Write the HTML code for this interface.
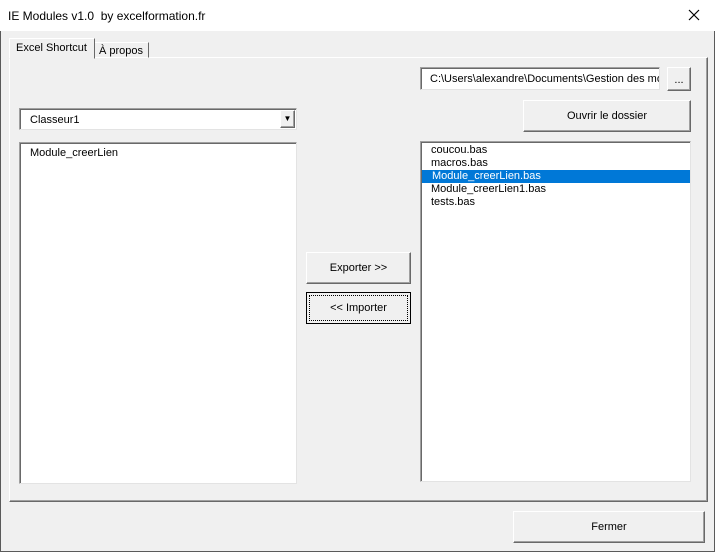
<!DOCTYPE html>
<html><head><meta charset="utf-8"><style>
*{margin:0;padding:0;box-sizing:border-box}
body{width:715px;height:552px;background:#f0f0f0;font-family:"Liberation Sans",sans-serif;font-size:11px;color:#000;position:relative;overflow:hidden}
.a{position:absolute}
.win{left:0;top:0;width:715px;height:552px;border:1px solid #5a5a5a;border-top:none}
.title{left:0;top:0;width:715px;height:31px;background:#fff;font-size:12px;padding:9px 0 0 8px}
.btn{position:absolute;background:#f0f0f0;border:1px solid;border-color:#fff #696969 #696969 #fff;box-shadow:inset -1px -1px 0 #a0a0a0;text-align:center}
.sunk{position:absolute;background:#fff;border:1px solid;border-color:#a0a0a0 #e3e3e3 #e3e3e3 #a0a0a0;box-shadow:inset 1px 1px 0 #696969}
.it{height:13px;line-height:13px;padding-left:10px}
</style></head><body>
<div class="a win"></div>
<div class="a title">IE Modules v1.0&nbsp; by excelformation.fr</div>
<svg class="a" style="left:688px;top:9px" width="12" height="12"><path d="M1 1L11 11M11 1L1 11" stroke="#000" stroke-width="1.2"/></svg>
<div class="a" style="left:9px;top:57px;width:699px;height:445px;border:1px solid;border-color:#fff #696969 #696969 #fff;box-shadow:inset -1px -1px 0 #a0a0a0"></div>
<div class="a" style="left:94px;top:42px;width:55px;height:16px;border:1px solid;border-color:#fff #696969 transparent #fff;padding:2px 0 0 4px;font-size:11px">À propos</div>
<div class="a" style="left:9px;top:38px;width:86px;height:21px;background:#f0f0f0;border:1px solid;border-color:#fff #696969 transparent #fff;padding:3px 0 0 6px">Excel Shortcut</div>
<div class="sunk" style="left:19px;top:108px;width:278px;height:22px;padding:5px 0 0 10px">Classeur1</div>
<div class="btn" style="left:280px;top:110px;width:15px;height:18px;font-size:8px;line-height:16px">▼</div>
<div class="sunk" style="left:19px;top:142px;width:278px;height:342px;padding-top:4px"><div class="it">Module_creerLien</div></div>
<div class="sunk" style="left:420px;top:67px;width:240px;height:23px;padding:5px 0 0 9px;white-space:nowrap;overflow:hidden">C:\Users\alexandre\Documents\Gestion des mo</div>
<div class="btn" style="left:667px;top:67px;width:24px;height:24px;line-height:24px">...</div>
<div class="btn" style="left:523px;top:100px;width:168px;height:32px;line-height:30px">Ouvrir le dossier</div>
<div class="sunk" style="left:420px;top:141px;width:271px;height:341px;padding-top:2px">
<div class="it">coucou.bas</div><div class="it">macros.bas</div>
<div class="it" style="background:#0078d7;color:#fff;margin-left:1px">Module_creerLien.bas</div>
<div class="it">Module_creerLien1.bas</div><div class="it">tests.bas</div></div>
<div class="btn" style="left:306px;top:252px;width:105px;height:32px;line-height:30px">Exporter &gt;&gt;</div>
<div class="a" style="left:306px;top:292px;width:105px;height:32px;border:1px solid #000;background:#f0f0f0"><div style="margin:2px;height:26px;border:1px dotted #000;text-align:center;line-height:24px">&lt;&lt; Importer</div></div>
<div class="btn" style="left:513px;top:511px;width:192px;height:32px;line-height:30px">Fermer</div>
</body></html>
